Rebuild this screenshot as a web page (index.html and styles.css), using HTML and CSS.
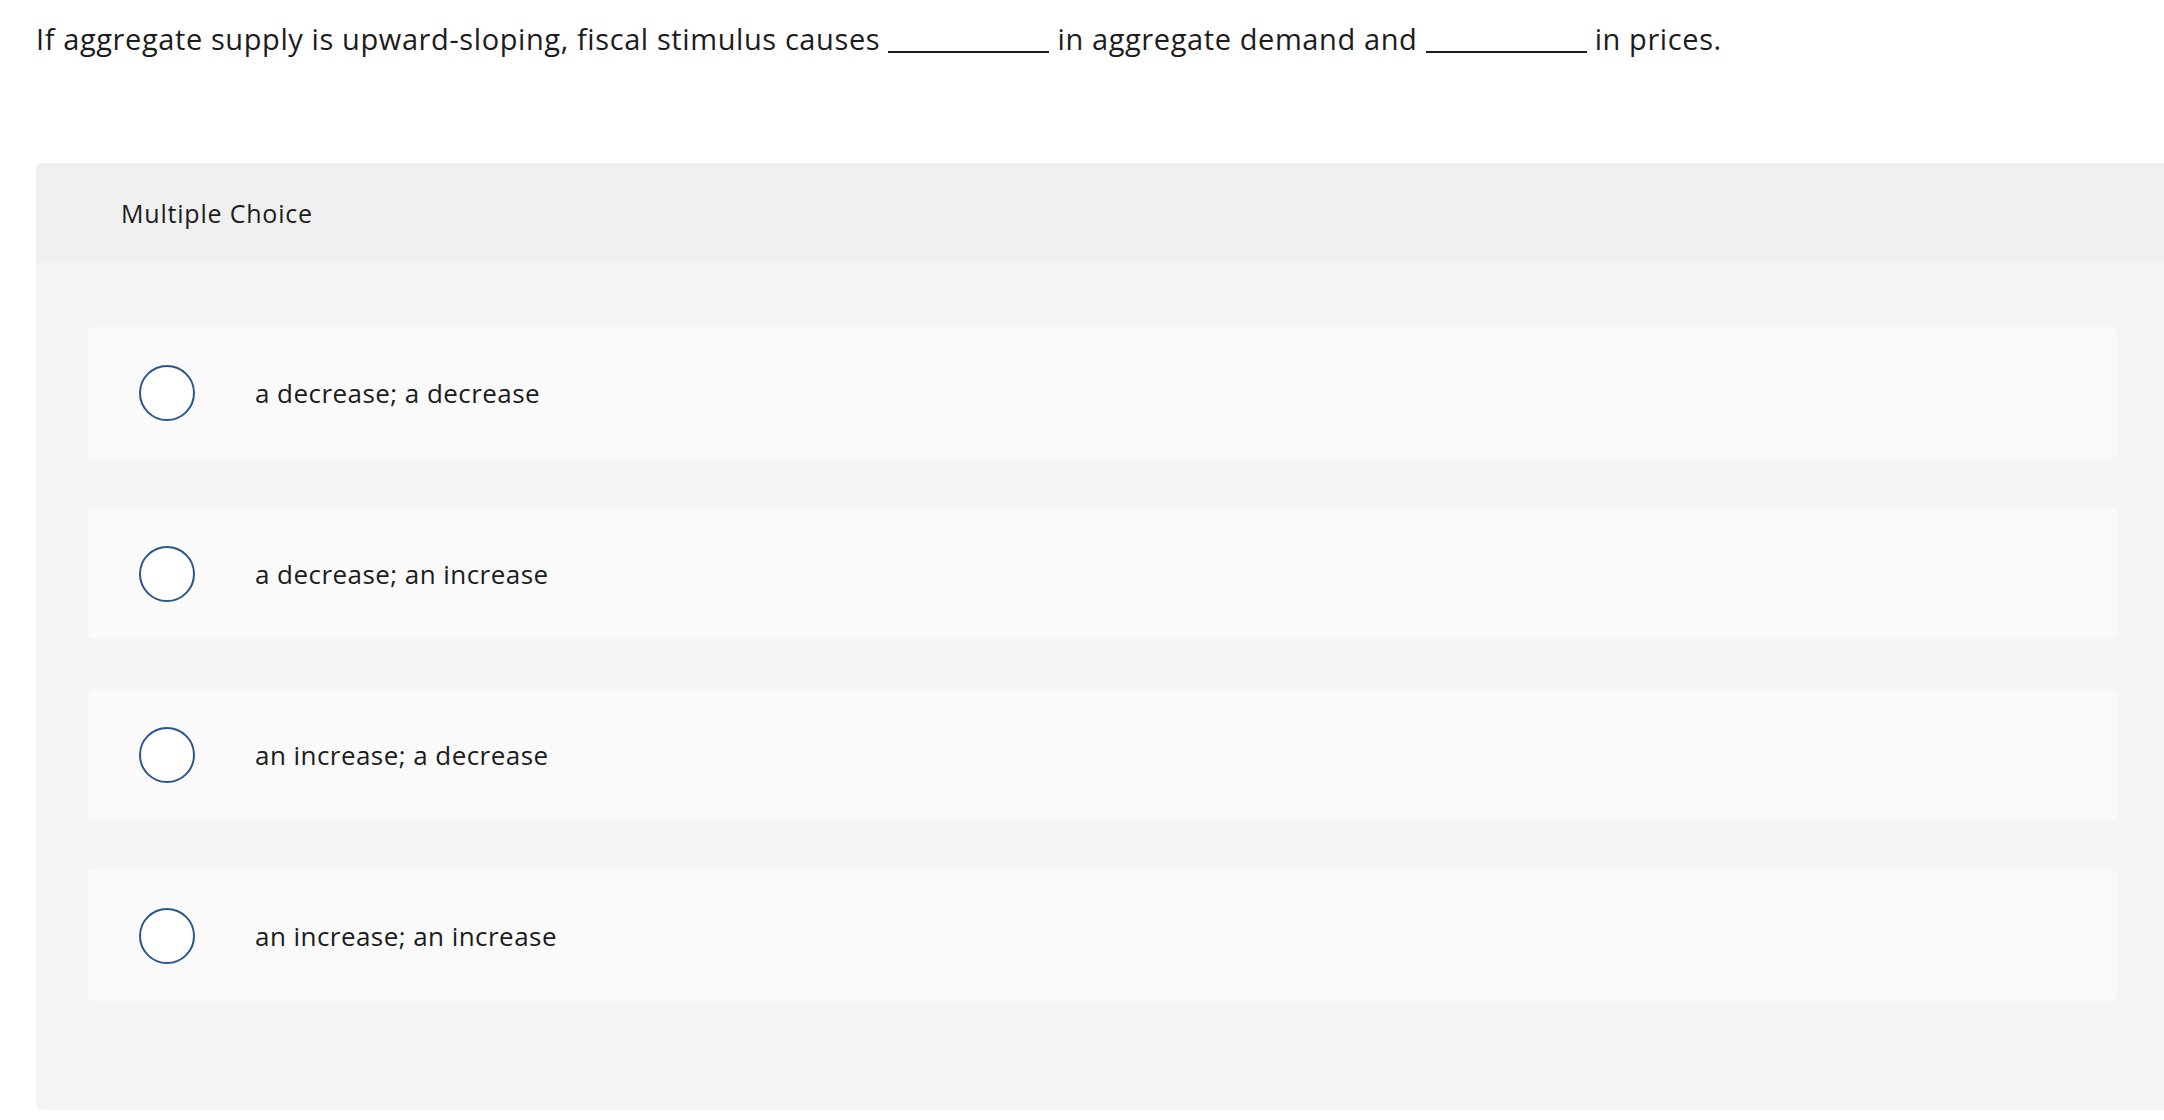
FILE: index.html
```html
<!DOCTYPE html>
<html lang="en">
<head>
<meta charset="utf-8">
<title>Multiple Choice</title>
<link rel="stylesheet" href="styles.css">
</head>
<body>
<div class="question">If aggregate supply is upward-sloping, fiscal stimulus causes <span class="blank"></span> in aggregate demand and <span class="blank"></span> in prices.</div>
<section class="panel">
  <header class="panel-head">Multiple Choice</header>
  <div class="panel-body">
    <label class="option"><span class="radio"></span><span class="opt-text">a decrease; a decrease</span></label>
    <label class="option"><span class="radio"></span><span class="opt-text">a decrease; an increase</span></label>
    <label class="option"><span class="radio"></span><span class="opt-text">an increase; a decrease</span></label>
    <label class="option"><span class="radio"></span><span class="opt-text">an increase; an increase</span></label>
  </div>
</section>
</body>
</html>
```
FILE: styles.css
```css
html, body {
  margin: 0;
  padding: 0;
  background: #ffffff;
  overflow: hidden;
}
body {
  font-family: "Open Sans", "Noto Sans", sans-serif;
  color: #1c1c1c;
}
.question {
  padding: 20px 0 0 36px;
  font-size: 29px;
  letter-spacing: 0.6px;
  line-height: 38px;
  height: 38px;
  white-space: nowrap;
}
.blank {
  display: inline-block;
  width: 161px;
  height: 0;
  border-bottom: 2px solid #1c1c1c;
  vertical-align: -3px;
}
.panel {
  margin: 105px 0 0 36px;
  border-radius: 6px 0 0 6px;
  overflow: hidden;
}
.panel-head {
  height: 100px;
  background: #f0f0f0;
  display: flex;
  align-items: center;
  padding-left: 85px;
  font-size: 25px;
  letter-spacing: 0.8px;
}
.panel-body {
  background: #f5f5f5;
  padding: 64px 47px 109px 52px;
  display: flex;
  flex-direction: column;
  gap: 50px;
}
.option {
  height: 131px;
  background: #fafafa;
  border-radius: 5px;
  display: flex;
  align-items: center;
  padding-left: 51px;
}
.radio {
  width: 52px;
  height: 52px;
  border: 2px solid #2b5790;
  border-radius: 50%;
  background: #ffffff;
  flex: none;
}
.opt-text {
  margin-left: 60px;
  font-size: 26px;
  letter-spacing: 0.45px;
}
```
